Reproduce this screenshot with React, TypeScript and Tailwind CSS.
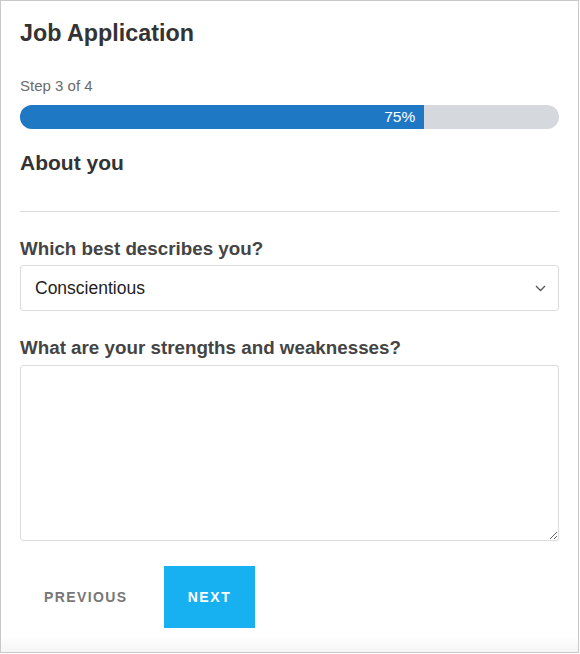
import React from "react";

export default function App() {
  return (
    <div
      className="w-[580px] h-[654px] bg-white"
      style={{ fontFamily: '"Liberation Sans", Arial, sans-serif' }}
    >
      <div className="w-[579px] h-[653px] border border-[#c9c9c9] bg-gradient-to-b from-white from-[97.5%] to-[#f5f5f5] px-[19px] pt-[18px] flex flex-col">
        <h1 className="text-[23.3px] leading-[28px] font-bold text-[#333]">Job Application</h1>
        <div className="mt-[30px] text-[15px] leading-[18px] text-[#6b6b6b]">Step 3 of 4</div>
        <div className="mt-[10px] h-[24px] w-full rounded-full bg-[#d5d8dd] overflow-hidden flex">
          <div className="w-[75%] h-full bg-[#1f78c4] flex items-center justify-end pr-[9px] text-white text-[15.5px]">
            75%
          </div>
        </div>
        <h2 className="mt-[21px] text-[21px] leading-[26px] font-bold text-[#333]">About you</h2>
        <div className="mt-[35px] h-[1px] bg-[#d9d9d9]" />
        <label className="mt-[26px] text-[18.8px] leading-[22px] font-bold text-[#444]">
          Which best describes you?
        </label>
        <div className="mt-[5px] h-[46px] border border-[#dcdcdc] rounded-[3px] flex items-center justify-between pl-[14px] pr-[12px] text-[17.5px] text-[#222]">
          <span>Conscientious</span>
          <svg width="11" height="7" viewBox="0 0 11 7" fill="none">
            <path d="M1 1l4.5 4.5L10 1" stroke="#555" strokeWidth="1.3" />
          </svg>
        </div>
        <label className="mt-[26px] text-[18.8px] leading-[22px] font-bold text-[#444]">
          What are your strengths and weaknesses?
        </label>
        <textarea className="mt-[6px] h-[176px] border border-[#dcdcdc] rounded-[3px] resize-y outline-none" />
        <div className="mt-[25px] flex items-center">
          <button className="w-[144px] h-[62px] text-left pl-[24px] text-[14px] font-bold tracking-[1.4px] text-[#777]">
            PREVIOUS
          </button>
          <button className="w-[91px] h-[62px] bg-[#17b0f0] text-white text-[14px] font-bold tracking-[1.6px]">
            NEXT
          </button>
        </div>
      </div>
    </div>
  );
}
